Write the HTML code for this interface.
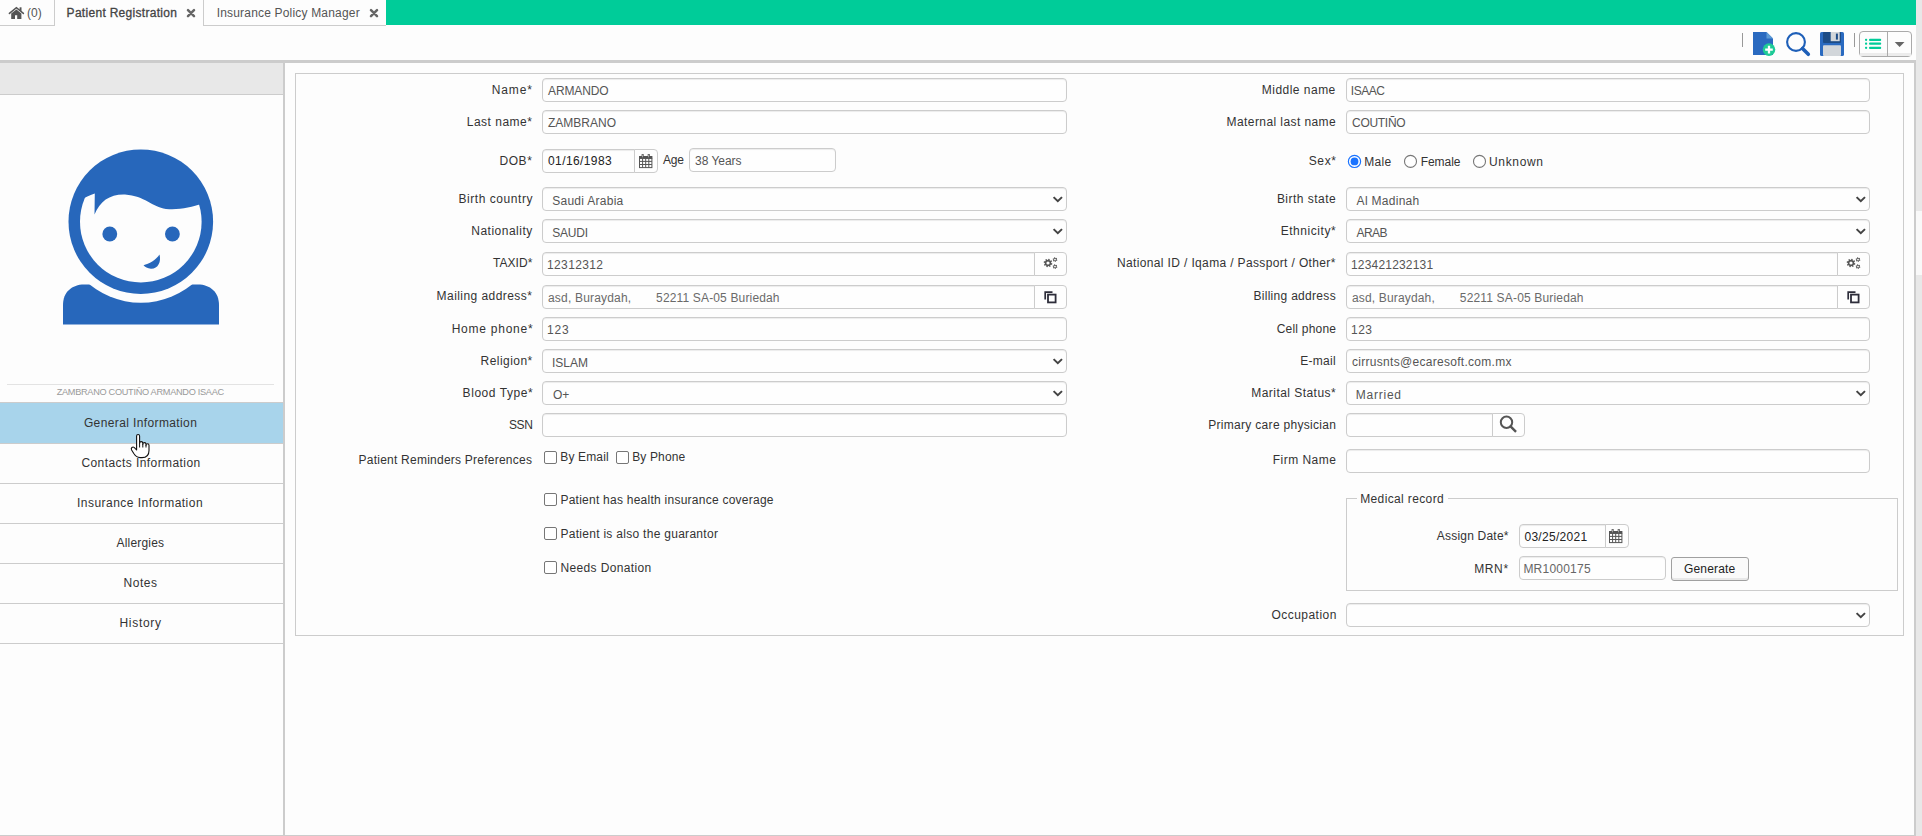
<!DOCTYPE html>
<html><head><meta charset="utf-8"><title>Patient Registration</title>
<style>
html,body{margin:0;padding:0;}
body{width:1922px;height:836px;overflow:hidden;position:relative;background:#fdfdfd;font-family:"Liberation Sans",sans-serif;}
.a{position:absolute;}
.t{position:absolute;white-space:pre;line-height:16px;font-family:"Liberation Sans",sans-serif;}
svg.a{overflow:visible;}
</style></head><body>
<div class="a" style="left:386px;top:0px;width:1530px;height:25px;background:#00cc99;"></div>
<div class="a" style="left:54px;top:0px;width:1px;height:26px;background:#cccccc;"></div>
<div class="a" style="left:0px;top:25px;width:55px;height:1px;background:#cccccc;"></div>
<div class="a" style="left:203px;top:0px;width:1px;height:26px;background:#cccccc;"></div>
<div class="a" style="left:203px;top:25px;width:183px;height:1px;background:#cccccc;"></div>
<svg class="a" style="left:0px;top:0px" width="30" height="25" viewBox="0 0 30 25"><path d="M9.4 13.4 L16.4 7.6 L23.4 13.4" fill="none" stroke="#555" stroke-width="1.5" stroke-linecap="round"/><rect x="19.6" y="7.3" width="1.9" height="3.6" fill="#555"/><path d="M11.2 13.6 L16.4 9.4 L21.4 13.6 L21.4 18.9 L17.2 18.9 L17.2 15.2 L15 15.2 L15 18.9 L11.2 18.9 Z" fill="#555"/></svg>
<svg class="a" style="left:185.7px;top:8px" width="10" height="10" viewBox="0 0 10 10"><path d="M2 2.2 L8 8.2 M8 2.2 L2 8.2" stroke="#666" stroke-width="2.5" stroke-linecap="round"/></svg>
<svg class="a" style="left:369px;top:8px" width="10" height="10" viewBox="0 0 10 10"><path d="M2 2.2 L8 8.2 M8 2.2 L2 8.2" stroke="#666" stroke-width="2.5" stroke-linecap="round"/></svg>
<div class="a" style="left:1742px;top:33px;width:1px;height:14px;background:#999999;"></div>
<div class="a" style="left:1854px;top:33px;width:1px;height:14px;background:#999999;"></div>
<svg class="a" style="left:1750px;top:30px" width="28" height="30" viewBox="1750 30 28 30"><path d="M1753 32 L1766.5 32 L1773 38.5 L1773 55 L1753 55 Z" fill="#2a6ac0"/><path d="M1766.5 32 L1773 38.5 L1766.5 38.5 Z" fill="#5c9bd6"/><circle cx="1769" cy="49.6" r="6.3" fill="#1ecb96"/><path d="M1765.2 49.6 L1772.8 49.6 M1769 45.8 L1769 53.4" stroke="#fff" stroke-width="2.3"/></svg>
<svg class="a" style="left:1784px;top:30px" width="30" height="30" viewBox="1784 30 30 30"><circle cx="1796" cy="42" r="8.9" fill="none" stroke="#1e5fb8" stroke-width="2.1"/><path d="M1802.5 48.5 L1808.3 54.3" stroke="#1e5fb8" stroke-width="3.6" stroke-linecap="round"/></svg>
<svg class="a" style="left:1818px;top:30px" width="30" height="30" viewBox="1818 30 30 30"><rect x="1820" y="32" width="24" height="24" rx="1.6" fill="#2a6ac0"/><rect x="1823" y="32" width="18" height="11" rx="1" fill="#1d4c86"/><rect x="1830.7" y="32" width="9" height="9.2" fill="#d2d6da"/><rect x="1835.9" y="33.6" width="2" height="6" fill="#1d4c86"/><rect x="1823" y="45.2" width="18" height="10.8" rx="1" fill="#d2d6da"/></svg>
<div class="a" style="left:1859px;top:31px;width:53px;height:26px;border:1px solid #aaaaaa;border-radius:4px;box-sizing:border-box;"></div>
<div class="a" style="left:1860px;top:53px;width:51px;height:3px;background:#ececec;"></div>
<div class="a" style="left:1887px;top:31px;width:1px;height:26px;background:#aaaaaa;"></div>
<svg class="a" style="left:1862px;top:36px" width="22" height="14" viewBox="1862 36 22 14"><g fill="#00cc99"><rect x="1865" y="38.7" width="2.2" height="2.2" rx="0.8"/><rect x="1865" y="42.6" width="2.2" height="2.2" rx="0.8"/><rect x="1865" y="46.7" width="2.2" height="2.2" rx="0.8"/><rect x="1869" y="38.7" width="12.2" height="2.2" rx="1"/><rect x="1869" y="42.6" width="12.2" height="2.2" rx="1"/><rect x="1869" y="46.7" width="12.2" height="2.2" rx="1"/></g></svg>
<svg class="a" style="left:1892px;top:40px" width="14" height="9" viewBox="1892 40 14 9"><path d="M1894.7 42 L1904.5 42 L1899.6 47 Z" fill="#666"/></svg>
<div class="a" style="left:0px;top:60px;width:1916px;height:3px;background:#cccccc;"></div>
<div class="a" style="left:1916px;top:0px;width:6px;height:836px;background:#e8e8e8;"></div>
<div class="a" style="left:1916px;top:211px;width:6px;height:64px;background:#f9f9f9;"></div>
<div class="a" style="left:0px;top:63px;width:283px;height:31px;background:#e8e8e8;"></div>
<div class="a" style="left:0px;top:94px;width:283px;height:1px;background:#cccccc;"></div>
<div class="a" style="left:283px;top:63px;width:2px;height:773px;background:#cccccc;"></div>
<div class="a" style="left:0px;top:835px;width:1916px;height:1px;background:#cccccc;"></div>
<div class="a" style="left:1914px;top:63px;width:2px;height:773px;background:#cccccc;"></div>
<svg class="a" style="left:55px;top:140px" width="175" height="195" viewBox="55 140 175 195"><defs><clipPath id="fc"><circle cx="140.8" cy="221.7" r="60.8"/></clipPath><mask id="bm"><rect x="55" y="140" width="175" height="195" fill="#fff"/><circle cx="140.8" cy="221.7" r="81" fill="#000"/></mask></defs><circle cx="140.8" cy="221.7" r="72.3" fill="#2767bb"/><path clip-path="url(#fc)" d="M70 300 L215 300 L215 199 C205 203 185 211 166 209 C152 207 145 196 125 194.5 C110 194 100 201 94.5 214.5 L94.8 193.5 C88 196 82 199 70 205 Z" fill="#fdfdfd"/><circle cx="109.8" cy="234" r="7.4" fill="#2767bb"/><circle cx="172.4" cy="234" r="7.4" fill="#2767bb"/><path d="M143.5 265.3 C149 264 156 260 159.5 254.6 C161.5 262 158 269 151 268.8 C147.5 268.5 145 267 143.5 265.3 Z" fill="#2767bb"/><path mask="url(#bm)" d="M63 324.5 L63 305 C63 292 72 284.5 84 284.5 L198 284.5 C210 284.5 219 292 219 305 L219 324.5 Z" fill="#2767bb"/></svg>
<div class="a" style="left:7px;top:384px;width:267px;height:1px;background:#e3e3e3;"></div>
<div class="a" style="left:0px;top:403px;width:283px;height:40px;background:#a8d4eb;"></div>
<div class="a" style="left:0px;top:402px;width:283px;height:1px;background:#cccccc;"></div>
<div class="a" style="left:0px;top:443px;width:283px;height:1px;background:#cccccc;"></div>
<div class="a" style="left:0px;top:483px;width:283px;height:1px;background:#cccccc;"></div>
<div class="a" style="left:0px;top:523px;width:283px;height:1px;background:#cccccc;"></div>
<div class="a" style="left:0px;top:563px;width:283px;height:1px;background:#cccccc;"></div>
<div class="a" style="left:0px;top:603px;width:283px;height:1px;background:#cccccc;"></div>
<div class="a" style="left:0px;top:643px;width:283px;height:1px;background:#cccccc;"></div>
<div class="a" style="left:295px;top:73px;width:1609px;height:563px;border:1px solid #cccccc;box-sizing:border-box;"></div>
<div class="a" style="left:542px;top:78px;width:525px;height:24px;background:#fefefe;border:1px solid #cccccc;border-radius:4px;box-sizing:border-box;box-shadow:inset 0 1px 1px rgba(0,0,0,.075);"></div>
<div class="a" style="left:542px;top:110px;width:525px;height:24px;background:#fefefe;border:1px solid #cccccc;border-radius:4px;box-sizing:border-box;box-shadow:inset 0 1px 1px rgba(0,0,0,.075);"></div>
<div class="a" style="left:542px;top:187px;width:525px;height:24px;background:#fefefe;border:1px solid #cccccc;border-radius:4px;box-sizing:border-box;box-shadow:inset 0 1px 1px rgba(0,0,0,.075);"></div>
<svg class="a" style="left:1051px;top:193px" width="14" height="12" viewBox="1051 193 14 12"><path d="M1053.6 197.1 L1057.8 201.2 L1062 197.1" fill="none" stroke="#444" stroke-width="2"/></svg>
<div class="a" style="left:542px;top:219px;width:525px;height:24px;background:#fefefe;border:1px solid #cccccc;border-radius:4px;box-sizing:border-box;box-shadow:inset 0 1px 1px rgba(0,0,0,.075);"></div>
<svg class="a" style="left:1051px;top:225px" width="14" height="12" viewBox="1051 225 14 12"><path d="M1053.6 229.1 L1057.8 233.2 L1062 229.1" fill="none" stroke="#444" stroke-width="2"/></svg>
<div class="a" style="left:542px;top:252px;width:493px;height:24px;background:#fefefe;border:1px solid #cccccc;border-radius:4px 0 0 4px;box-sizing:border-box;box-shadow:inset 0 1px 1px rgba(0,0,0,.075);"></div>
<div class="a" style="left:1034px;top:252px;width:33px;height:24px;background:#fefefe;border:1px solid #cccccc;border-radius:0 4px 4px 0;box-sizing:border-box;"></div>
<svg class="a" style="left:1040px;top:255.3px" width="18" height="16" viewBox="1040 255.3 18 16"><path fill-rule="evenodd" fill="#555" d="M1051.20 263.30 L1052.36 263.92 L1052.07 264.98 L1050.75 264.93 L1050.26 265.56 L1050.64 266.82 L1049.68 267.37 L1048.80 266.40 L1048.00 266.50 L1047.38 267.66 L1046.32 267.37 L1046.37 266.05 L1045.74 265.56 L1044.48 265.94 L1043.93 264.98 L1044.90 264.10 L1044.80 263.30 L1043.64 262.68 L1043.93 261.62 L1045.25 261.67 L1045.74 261.04 L1045.36 259.78 L1046.32 259.23 L1047.20 260.20 L1048.00 260.10 L1048.62 258.94 L1049.68 259.23 L1049.63 260.55 L1050.26 261.04 L1051.52 260.66 L1052.07 261.62 L1051.10 262.50 Z M1049.60 263.30 A1.6 1.6 0 1 0 1046.40 263.30 A1.6 1.6 0 1 0 1049.60 263.30 Z M1056.70 259.90 L1057.36 260.35 L1057.08 261.10 L1056.29 261.01 L1055.85 261.37 L1055.79 262.17 L1055.00 262.30 L1054.68 261.57 L1054.15 261.37 L1053.43 261.72 L1052.92 261.10 L1053.39 260.46 L1053.30 259.90 L1052.64 259.45 L1052.92 258.70 L1053.71 258.79 L1054.15 258.43 L1054.21 257.63 L1055.00 257.50 L1055.32 258.23 L1055.85 258.43 L1056.57 258.08 L1057.08 258.70 L1056.61 259.34 Z M1055.90 259.90 A0.9 0.9 0 1 0 1054.10 259.90 A0.9 0.9 0 1 0 1055.90 259.90 Z M1056.70 266.90 L1057.36 267.35 L1057.08 268.10 L1056.29 268.01 L1055.85 268.37 L1055.79 269.17 L1055.00 269.30 L1054.68 268.57 L1054.15 268.37 L1053.43 268.72 L1052.92 268.10 L1053.39 267.46 L1053.30 266.90 L1052.64 266.45 L1052.92 265.70 L1053.71 265.79 L1054.15 265.43 L1054.21 264.63 L1055.00 264.50 L1055.32 265.23 L1055.85 265.43 L1056.57 265.08 L1057.08 265.70 L1056.61 266.34 Z M1055.90 266.90 A0.9 0.9 0 1 0 1054.10 266.90 A0.9 0.9 0 1 0 1055.90 266.90 Z"/></svg>
<div class="a" style="left:542px;top:285px;width:493px;height:24px;background:#fefefe;border:1px solid #cccccc;border-radius:4px 0 0 4px;box-sizing:border-box;box-shadow:inset 0 1px 1px rgba(0,0,0,.075);"></div>
<div class="a" style="left:1034px;top:285px;width:33px;height:24px;background:#fefefe;border:1px solid #cccccc;border-radius:0 4px 4px 0;box-sizing:border-box;"></div>
<svg class="a" style="left:1044px;top:291px" width="14" height="14" viewBox="0 0 14 14"><path d="M1.2 8.5 L1.2 1.2 L8.5 1.2" fill="none" stroke="#2d2d3a" stroke-width="1.7"/><rect x="4.0" y="3.6" width="7.6" height="7.8" fill="none" stroke="#2d2d3a" stroke-width="1.8"/></svg>
<div class="a" style="left:542px;top:317px;width:525px;height:24px;background:#fefefe;border:1px solid #cccccc;border-radius:4px;box-sizing:border-box;box-shadow:inset 0 1px 1px rgba(0,0,0,.075);"></div>
<div class="a" style="left:542px;top:349px;width:525px;height:24px;background:#fefefe;border:1px solid #cccccc;border-radius:4px;box-sizing:border-box;box-shadow:inset 0 1px 1px rgba(0,0,0,.075);"></div>
<svg class="a" style="left:1051px;top:355px" width="14" height="12" viewBox="1051 355 14 12"><path d="M1053.6 359.1 L1057.8 363.2 L1062 359.1" fill="none" stroke="#444" stroke-width="2"/></svg>
<div class="a" style="left:542px;top:381px;width:525px;height:24px;background:#fefefe;border:1px solid #cccccc;border-radius:4px;box-sizing:border-box;box-shadow:inset 0 1px 1px rgba(0,0,0,.075);"></div>
<svg class="a" style="left:1051px;top:387px" width="14" height="12" viewBox="1051 387 14 12"><path d="M1053.6 391.1 L1057.8 395.2 L1062 391.1" fill="none" stroke="#444" stroke-width="2"/></svg>
<div class="a" style="left:542px;top:413px;width:525px;height:24px;background:#fefefe;border:1px solid #cccccc;border-radius:4px;box-sizing:border-box;box-shadow:inset 0 1px 1px rgba(0,0,0,.075);"></div>
<div class="a" style="left:1346px;top:78px;width:524px;height:24px;background:#fefefe;border:1px solid #cccccc;border-radius:4px;box-sizing:border-box;box-shadow:inset 0 1px 1px rgba(0,0,0,.075);"></div>
<div class="a" style="left:1346px;top:110px;width:524px;height:24px;background:#fefefe;border:1px solid #cccccc;border-radius:4px;box-sizing:border-box;box-shadow:inset 0 1px 1px rgba(0,0,0,.075);"></div>
<div class="a" style="left:1346px;top:187px;width:524px;height:24px;background:#fefefe;border:1px solid #cccccc;border-radius:4px;box-sizing:border-box;box-shadow:inset 0 1px 1px rgba(0,0,0,.075);"></div>
<svg class="a" style="left:1854px;top:193px" width="14" height="12" viewBox="1854 193 14 12"><path d="M1856.6 197.1 L1860.8 201.2 L1865 197.1" fill="none" stroke="#444" stroke-width="2"/></svg>
<div class="a" style="left:1346px;top:219px;width:524px;height:24px;background:#fefefe;border:1px solid #cccccc;border-radius:4px;box-sizing:border-box;box-shadow:inset 0 1px 1px rgba(0,0,0,.075);"></div>
<svg class="a" style="left:1854px;top:225px" width="14" height="12" viewBox="1854 225 14 12"><path d="M1856.6 229.1 L1860.8 233.2 L1865 229.1" fill="none" stroke="#444" stroke-width="2"/></svg>
<div class="a" style="left:1346px;top:252px;width:492px;height:24px;background:#fefefe;border:1px solid #cccccc;border-radius:4px 0 0 4px;box-sizing:border-box;box-shadow:inset 0 1px 1px rgba(0,0,0,.075);"></div>
<div class="a" style="left:1837px;top:252px;width:33px;height:24px;background:#fefefe;border:1px solid #cccccc;border-radius:0 4px 4px 0;box-sizing:border-box;"></div>
<svg class="a" style="left:1843px;top:255.3px" width="18" height="16" viewBox="1843 255.3 18 16"><path fill-rule="evenodd" fill="#555" d="M1854.20 263.30 L1855.36 263.92 L1855.07 264.98 L1853.75 264.93 L1853.26 265.56 L1853.64 266.82 L1852.68 267.37 L1851.80 266.40 L1851.00 266.50 L1850.38 267.66 L1849.32 267.37 L1849.37 266.05 L1848.74 265.56 L1847.48 265.94 L1846.93 264.98 L1847.90 264.10 L1847.80 263.30 L1846.64 262.68 L1846.93 261.62 L1848.25 261.67 L1848.74 261.04 L1848.36 259.78 L1849.32 259.23 L1850.20 260.20 L1851.00 260.10 L1851.62 258.94 L1852.68 259.23 L1852.63 260.55 L1853.26 261.04 L1854.52 260.66 L1855.07 261.62 L1854.10 262.50 Z M1852.60 263.30 A1.6 1.6 0 1 0 1849.40 263.30 A1.6 1.6 0 1 0 1852.60 263.30 Z M1859.70 259.90 L1860.36 260.35 L1860.08 261.10 L1859.29 261.01 L1858.85 261.37 L1858.79 262.17 L1858.00 262.30 L1857.68 261.57 L1857.15 261.37 L1856.43 261.72 L1855.92 261.10 L1856.39 260.46 L1856.30 259.90 L1855.64 259.45 L1855.92 258.70 L1856.71 258.79 L1857.15 258.43 L1857.21 257.63 L1858.00 257.50 L1858.32 258.23 L1858.85 258.43 L1859.57 258.08 L1860.08 258.70 L1859.61 259.34 Z M1858.90 259.90 A0.9 0.9 0 1 0 1857.10 259.90 A0.9 0.9 0 1 0 1858.90 259.90 Z M1859.70 266.90 L1860.36 267.35 L1860.08 268.10 L1859.29 268.01 L1858.85 268.37 L1858.79 269.17 L1858.00 269.30 L1857.68 268.57 L1857.15 268.37 L1856.43 268.72 L1855.92 268.10 L1856.39 267.46 L1856.30 266.90 L1855.64 266.45 L1855.92 265.70 L1856.71 265.79 L1857.15 265.43 L1857.21 264.63 L1858.00 264.50 L1858.32 265.23 L1858.85 265.43 L1859.57 265.08 L1860.08 265.70 L1859.61 266.34 Z M1858.90 266.90 A0.9 0.9 0 1 0 1857.10 266.90 A0.9 0.9 0 1 0 1858.90 266.90 Z"/></svg>
<div class="a" style="left:1346px;top:285px;width:492px;height:24px;background:#fefefe;border:1px solid #cccccc;border-radius:4px 0 0 4px;box-sizing:border-box;box-shadow:inset 0 1px 1px rgba(0,0,0,.075);"></div>
<div class="a" style="left:1837px;top:285px;width:33px;height:24px;background:#fefefe;border:1px solid #cccccc;border-radius:0 4px 4px 0;box-sizing:border-box;"></div>
<svg class="a" style="left:1847px;top:291px" width="14" height="14" viewBox="0 0 14 14"><path d="M1.2 8.5 L1.2 1.2 L8.5 1.2" fill="none" stroke="#2d2d3a" stroke-width="1.7"/><rect x="4.0" y="3.6" width="7.6" height="7.8" fill="none" stroke="#2d2d3a" stroke-width="1.8"/></svg>
<div class="a" style="left:1346px;top:317px;width:524px;height:24px;background:#fefefe;border:1px solid #cccccc;border-radius:4px;box-sizing:border-box;box-shadow:inset 0 1px 1px rgba(0,0,0,.075);"></div>
<div class="a" style="left:1346px;top:349px;width:524px;height:24px;background:#fefefe;border:1px solid #cccccc;border-radius:4px;box-sizing:border-box;box-shadow:inset 0 1px 1px rgba(0,0,0,.075);"></div>
<div class="a" style="left:1346px;top:381px;width:524px;height:24px;background:#fefefe;border:1px solid #cccccc;border-radius:4px;box-sizing:border-box;box-shadow:inset 0 1px 1px rgba(0,0,0,.075);"></div>
<svg class="a" style="left:1854px;top:387px" width="14" height="12" viewBox="1854 387 14 12"><path d="M1856.6 391.1 L1860.8 395.2 L1865 391.1" fill="none" stroke="#444" stroke-width="2"/></svg>
<div class="a" style="left:1346px;top:449px;width:524px;height:24px;background:#fefefe;border:1px solid #cccccc;border-radius:4px;box-sizing:border-box;box-shadow:inset 0 1px 1px rgba(0,0,0,.075);"></div>
<div class="a" style="left:542px;top:149px;width:93px;height:24px;background:#fefefe;border:1px solid #cccccc;border-radius:4px 0 0 4px;box-sizing:border-box;box-shadow:inset 0 1px 1px rgba(0,0,0,.075);"></div>
<div class="a" style="left:634px;top:149px;width:24px;height:24px;background:#fefefe;border:1px solid #cccccc;border-radius:0 4px 4px 0;box-sizing:border-box;"></div>
<svg class="a" style="left:639.2px;top:154px" width="15" height="15" viewBox="0 0 15 15"><g fill="#555"><rect x="0" y="2" width="13.4" height="2.6" /><rect x="2.6" y="0" width="2.1" height="3.9" rx="0.5"/><rect x="8.7" y="0" width="2.1" height="3.9" rx="0.5"/></g><g fill="none" stroke="#555" stroke-width="1"><rect x="0.5" y="4.4" width="12.4" height="9.2"/><path d="M0.5 7.4 H12.9 M0.5 10.5 H12.9 M3.6 4.4 V13.6 M6.7 4.4 V13.6 M9.8 4.4 V13.6"/></g><g fill="#eee"><rect x="3.4" y="0.7" width="0.5" height="2.6"/><rect x="9.5" y="0.7" width="0.5" height="2.6"/></g></svg>
<div class="a" style="left:689px;top:148px;width:147px;height:24px;background:#fefefe;border:1px solid #cccccc;border-radius:4px;box-sizing:border-box;box-shadow:inset 0 1px 1px rgba(0,0,0,.075);"></div>
<svg class="a" style="left:1346px;top:153px" width="200" height="17" viewBox="1346 153 200 17"><circle cx="1354.5" cy="161.4" r="6.1" fill="#fff" stroke="#1a73ff" stroke-width="1.2"/><circle cx="1354.5" cy="161.4" r="3.9" fill="#1a73ff"/><circle cx="1410.5" cy="161.4" r="6" fill="#fff" stroke="#777" stroke-width="1.1"/><circle cx="1479.5" cy="161.4" r="6" fill="#fff" stroke="#777" stroke-width="1.1"/></svg>
<div class="a" style="left:544px;top:451px;width:13px;height:13px;background:#ffffff;border:1px solid #767676;border-radius:2px;box-sizing:border-box;"></div>
<div class="a" style="left:616px;top:451px;width:13px;height:13px;background:#ffffff;border:1px solid #767676;border-radius:2px;box-sizing:border-box;"></div>
<div class="a" style="left:544px;top:493px;width:13px;height:13px;background:#ffffff;border:1px solid #767676;border-radius:2px;box-sizing:border-box;"></div>
<div class="a" style="left:544px;top:527px;width:13px;height:13px;background:#ffffff;border:1px solid #767676;border-radius:2px;box-sizing:border-box;"></div>
<div class="a" style="left:544px;top:561px;width:13px;height:13px;background:#ffffff;border:1px solid #767676;border-radius:2px;box-sizing:border-box;"></div>
<div class="a" style="left:1346px;top:413px;width:147px;height:24px;background:#fefefe;border:1px solid #cccccc;border-radius:4px 0 0 4px;box-sizing:border-box;box-shadow:inset 0 1px 1px rgba(0,0,0,.075);"></div>
<div class="a" style="left:1492px;top:413px;width:33px;height:24px;background:#fefefe;border:1px solid #cccccc;border-radius:0 4px 4px 0;box-sizing:border-box;"></div>
<svg class="a" style="left:1498px;top:414px" width="22" height="22" viewBox="1498 414 22 22"><circle cx="1506.5" cy="422.3" r="5.7" fill="none" stroke="#555" stroke-width="2"/><path d="M1510.6 426.4 L1515.2 431" stroke="#555" stroke-width="2.4" stroke-linecap="square"/></svg>
<div class="a" style="left:1346px;top:498px;width:552px;height:93px;border:1px solid #cccccc;box-sizing:border-box;"></div>
<div class="a" style="left:1357px;top:492px;width:91px;height:12px;background:#fdfdfd;"></div>
<div class="a" style="left:1519px;top:524px;width:87px;height:24px;background:#fefefe;border:1px solid #cccccc;border-radius:4px 0 0 4px;box-sizing:border-box;box-shadow:inset 0 1px 1px rgba(0,0,0,.075);"></div>
<div class="a" style="left:1605px;top:524px;width:24px;height:24px;background:#fefefe;border:1px solid #cccccc;border-radius:0 4px 4px 0;box-sizing:border-box;"></div>
<svg class="a" style="left:1609.3px;top:529px" width="15" height="15" viewBox="0 0 15 15"><g fill="#555"><rect x="0" y="2" width="13.4" height="2.6" /><rect x="2.6" y="0" width="2.1" height="3.9" rx="0.5"/><rect x="8.7" y="0" width="2.1" height="3.9" rx="0.5"/></g><g fill="none" stroke="#555" stroke-width="1"><rect x="0.5" y="4.4" width="12.4" height="9.2"/><path d="M0.5 7.4 H12.9 M0.5 10.5 H12.9 M3.6 4.4 V13.6 M6.7 4.4 V13.6 M9.8 4.4 V13.6"/></g><g fill="#eee"><rect x="3.4" y="0.7" width="0.5" height="2.6"/><rect x="9.5" y="0.7" width="0.5" height="2.6"/></g></svg>
<div class="a" style="left:1519px;top:556px;width:147px;height:24px;background:#fefefe;border:1px solid #cccccc;border-radius:4px;box-sizing:border-box;box-shadow:inset 0 1px 1px rgba(0,0,0,.075);"></div>
<div class="a" style="left:1671px;top:557px;width:78px;height:24px;background:#fafafa;border:1px solid #a0a0a0;border-radius:3px;box-sizing:border-box;box-shadow:inset 0 -2px 0 #e8e8e8;"></div>
<div class="a" style="left:1346px;top:603px;width:524px;height:24px;background:#fefefe;border:1px solid #cccccc;border-radius:4px;box-sizing:border-box;box-shadow:inset 0 1px 1px rgba(0,0,0,.075);"></div>
<svg class="a" style="left:1854px;top:609px" width="14" height="12" viewBox="1854 609 14 12"><path d="M1856.6 613.1 L1860.8 617.2 L1865 613.1" fill="none" stroke="#444" stroke-width="2"/></svg>
<svg class="a" style="left:128px;top:431px" width="26" height="30" viewBox="128 431 26 30"><path d="M136.6 447.5 L136.6 436 C136.6 434 139.6 434 139.6 436 L139.6 443.5 C139.6 441 142.8 441 142.8 443.5 L142.8 444.3 C142.8 442 146 442 146 444.3 L146 445.2 C146 443.2 149 443.2 149 445.2 L149 450.5 C149 455 146.5 457.6 142 457.6 L140 457.6 C137 457.6 135.5 456 133.8 453.5 L131.6 450 C130.5 448 132.6 446.2 134.4 447.6 L136.6 450 Z" fill="#fff" stroke="#111" stroke-width="1.1" stroke-linejoin="round"/><path d="M139.6 443.5 L139.6 447.5 M142.8 444 L142.8 447.5 M146 445 L146 447.5" stroke="#111" stroke-width="1"/></svg>
<div class="t" style="left:27.00px;top:5px;font-size:12px;color:#555;letter-spacing:0.000px">(0)</div>
<div class="t" style="left:66.60px;top:5px;font-size:12px;-webkit-text-stroke:0.3px #444;color:#444;letter-spacing:0.295px">Patient Registration</div>
<div class="t" style="left:216.70px;top:5px;font-size:12px;color:#555;letter-spacing:0.183px">Insurance Policy Manager</div>
<div class="t" style="left:56.70px;top:384px;font-size:9.2px;color:#999;letter-spacing:-0.300px">ZAMBRANO COUTIÑO ARMANDO ISAAC</div>
<div class="t" style="left:83.90px;top:415px;font-size:12px;color:#333;letter-spacing:0.383px">General Information</div>
<div class="t" style="left:81.40px;top:455px;font-size:12px;color:#333;letter-spacing:0.426px">Contacts Information</div>
<div class="t" style="left:77.00px;top:495px;font-size:12px;color:#333;letter-spacing:0.475px">Insurance Information</div>
<div class="t" style="left:116.50px;top:535px;font-size:12px;color:#333;letter-spacing:0.188px">Allergies</div>
<div class="t" style="left:123.50px;top:575px;font-size:12px;color:#333;letter-spacing:0.550px">Notes</div>
<div class="t" style="left:119.50px;top:615px;font-size:12px;color:#333;letter-spacing:0.700px">History</div>
<div class="t" style="left:491.70px;top:82px;font-size:12px;color:#333;letter-spacing:0.875px">Name*</div>
<div class="t" style="left:548.10px;top:83px;font-size:12px;color:#555;letter-spacing:-0.150px">ARMANDO</div>
<div class="t" style="left:466.80px;top:114px;font-size:12px;color:#333;letter-spacing:0.489px">Last name*</div>
<div class="t" style="left:548.00px;top:115px;font-size:12px;color:#555;letter-spacing:0.000px">ZAMBRANO</div>
<div class="t" style="left:458.40px;top:191px;font-size:12px;color:#333;letter-spacing:0.567px">Birth country</div>
<div class="t" style="left:552.20px;top:193px;font-size:12px;color:#555;letter-spacing:0.273px">Saudi Arabia</div>
<div class="t" style="left:471.30px;top:223px;font-size:12px;color:#333;letter-spacing:0.490px">Nationality</div>
<div class="t" style="left:552.20px;top:225px;font-size:12px;color:#555;letter-spacing:-0.225px">SAUDI</div>
<div class="t" style="left:492.90px;top:255px;font-size:12px;color:#333;letter-spacing:0.060px">TAXID*</div>
<div class="t" style="left:547.00px;top:257px;font-size:12px;color:#555;letter-spacing:0.371px">12312312</div>
<div class="t" style="left:436.60px;top:288px;font-size:12px;color:#333;letter-spacing:0.440px">Mailing address*</div>
<div class="t" style="left:451.70px;top:321px;font-size:12px;color:#333;letter-spacing:0.750px">Home phone*</div>
<div class="t" style="left:547.00px;top:322px;font-size:12px;color:#555;letter-spacing:0.800px">123</div>
<div class="t" style="left:480.60px;top:353px;font-size:12px;color:#333;letter-spacing:0.450px">Religion*</div>
<div class="t" style="left:552.00px;top:355px;font-size:12px;color:#555;letter-spacing:0.000px">ISLAM</div>
<div class="t" style="left:462.60px;top:385px;font-size:12px;color:#333;letter-spacing:0.560px">Blood Type*</div>
<div class="t" style="left:553.00px;top:387px;font-size:12px;color:#555;letter-spacing:0.000px">O+</div>
<div class="t" style="left:508.90px;top:417px;font-size:12px;color:#333;letter-spacing:-0.350px">SSN</div>
<div class="t" style="left:1261.80px;top:82px;font-size:12px;color:#333;letter-spacing:0.480px">Middle name</div>
<div class="t" style="left:1350.80px;top:83px;font-size:12px;color:#555;letter-spacing:-0.450px">ISAAC</div>
<div class="t" style="left:1226.60px;top:114px;font-size:12px;color:#333;letter-spacing:0.412px">Maternal last name</div>
<div class="t" style="left:1352.00px;top:115px;font-size:12px;color:#555;letter-spacing:-0.283px">COUTIÑO</div>
<div class="t" style="left:1276.90px;top:191px;font-size:12px;color:#333;letter-spacing:0.470px">Birth state</div>
<div class="t" style="left:1356.60px;top:193px;font-size:12px;color:#555;letter-spacing:0.289px">Al Madinah</div>
<div class="t" style="left:1280.70px;top:223px;font-size:12px;color:#333;letter-spacing:0.544px">Ethnicity*</div>
<div class="t" style="left:1356.60px;top:225px;font-size:12px;color:#555;letter-spacing:-0.600px">ARAB</div>
<div class="t" style="left:1117.00px;top:255px;font-size:12px;color:#333;letter-spacing:0.358px">National ID / Iqama / Passport / Other*</div>
<div class="t" style="left:1351.00px;top:257px;font-size:12px;color:#555;letter-spacing:0.182px">123421232131</div>
<div class="t" style="left:1253.40px;top:288px;font-size:12px;color:#333;letter-spacing:0.300px">Billing address</div>
<div class="t" style="left:1276.70px;top:321px;font-size:12px;color:#333;letter-spacing:0.211px">Cell phone</div>
<div class="t" style="left:1351.00px;top:322px;font-size:12px;color:#555;letter-spacing:0.500px">123</div>
<div class="t" style="left:1300.30px;top:353px;font-size:12px;color:#333;letter-spacing:0.260px">E-mail</div>
<div class="t" style="left:1352.00px;top:354px;font-size:12px;color:#555;letter-spacing:0.292px">cirrusnts@ecaresoft.com.mx</div>
<div class="t" style="left:1251.30px;top:385px;font-size:12px;color:#333;letter-spacing:0.450px">Marital Status*</div>
<div class="t" style="left:1355.80px;top:387px;font-size:12px;color:#555;letter-spacing:0.750px">Married</div>
<div class="t" style="left:1272.70px;top:452px;font-size:12px;color:#333;letter-spacing:0.487px">Firm Name</div>
<div class="t" style="left:548.00px;top:290px;font-size:12px;color:#6a6a6a;letter-spacing:0.185px">asd, Buraydah,</div>
<div class="t" style="left:656.10px;top:290px;font-size:12px;color:#6a6a6a;letter-spacing:0.153px">52211 SA-05 Buriedah</div>
<div class="t" style="left:1352.00px;top:290px;font-size:12px;color:#6a6a6a;letter-spacing:0.154px">asd, Buraydah,</div>
<div class="t" style="left:1459.80px;top:290px;font-size:12px;color:#6a6a6a;letter-spacing:0.168px">52211 SA-05 Buriedah</div>
<div class="t" style="left:499.40px;top:153px;font-size:12px;color:#333;letter-spacing:0.600px">DOB*</div>
<div class="t" style="left:548.00px;top:153px;font-size:12px;color:#222;letter-spacing:0.400px">01/16/1983</div>
<div class="t" style="left:663.00px;top:152px;font-size:12px;color:#333;letter-spacing:-0.250px">Age</div>
<div class="t" style="left:695.10px;top:153px;font-size:12px;color:#555;letter-spacing:-0.043px">38 Years</div>
<div class="t" style="left:1308.70px;top:153px;font-size:12px;color:#333;letter-spacing:0.633px">Sex*</div>
<div class="t" style="left:1364.20px;top:154px;font-size:12px;color:#333;letter-spacing:0.333px">Male</div>
<div class="t" style="left:1420.70px;top:154px;font-size:12px;color:#333;letter-spacing:-0.040px">Female</div>
<div class="t" style="left:1489.00px;top:154px;font-size:12px;color:#333;letter-spacing:0.667px">Unknown</div>
<div class="t" style="left:358.50px;top:452px;font-size:12px;color:#333;letter-spacing:0.239px">Patient Reminders Preferences</div>
<div class="t" style="left:560.30px;top:449px;font-size:12px;color:#333;letter-spacing:0.143px">By Email</div>
<div class="t" style="left:632.20px;top:449px;font-size:12px;color:#333;letter-spacing:0.143px">By Phone</div>
<div class="t" style="left:560.40px;top:492px;font-size:12px;color:#333;letter-spacing:0.250px">Patient has health insurance coverage</div>
<div class="t" style="left:560.40px;top:526px;font-size:12px;color:#333;letter-spacing:0.289px">Patient is also the guarantor</div>
<div class="t" style="left:560.40px;top:560px;font-size:12px;color:#333;letter-spacing:0.369px">Needs Donation</div>
<div class="t" style="left:1208.20px;top:417px;font-size:12px;color:#333;letter-spacing:0.305px">Primary care physician</div>
<div class="t" style="left:1360.20px;top:491px;font-size:12px;color:#333;letter-spacing:0.369px">Medical record</div>
<div class="t" style="left:1436.80px;top:528px;font-size:12px;color:#333;letter-spacing:0.209px">Assign Date*</div>
<div class="t" style="left:1524.40px;top:529px;font-size:12px;color:#222;letter-spacing:0.311px">03/25/2021</div>
<div class="t" style="left:1474.20px;top:561px;font-size:12px;color:#333;letter-spacing:0.633px">MRN*</div>
<div class="t" style="left:1523.40px;top:561px;font-size:12px;color:#666;letter-spacing:0.225px">MR1000175</div>
<div class="t" style="left:1683.90px;top:561px;font-size:12px;color:#222;letter-spacing:0.186px">Generate</div>
<div class="t" style="left:1271.50px;top:607px;font-size:12px;color:#333;letter-spacing:0.456px">Occupation</div>
</body></html>
